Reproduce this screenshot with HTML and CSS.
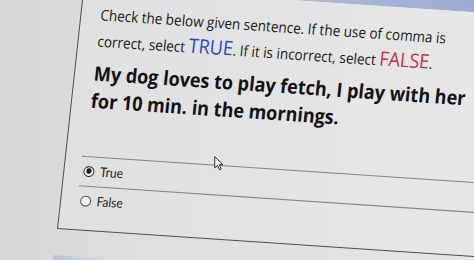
FILE: index.html
```html
<!DOCTYPE html>
<html>
<head>
<meta charset="utf-8">
<link rel="stylesheet" href="styles.css">
</head>
<body>
<div class="stage">
  <div class="topbar"></div>
  <div class="card">
    <p class="prompt">Check the below given sentence. If the use of comma is<br>correct, select <span class="word-true">TRUE</span>. If it is incorrect, select <span class="word-false">FALSE</span>.</p>
    <p class="sentence">My dog loves to play fetch, I play with her<br>for 10 min. in the mornings.</p>
    <div class="answers">
      <div class="answer"><span class="radio radio-checked"></span><span class="answer-label">True</span></div>
      <div class="answer"><span class="radio"></span><span class="answer-label">False</span></div>
    </div>
  </div>
  <div class="btnbar"></div>
</div>
<svg class="cursor" viewBox="0 0 11 17" width="10" height="15">
  <path d="M0.7 0.7 L0.7 13.5 L3.8 10.6 L6 15.6 L8 14.7 L5.8 9.8 L9.9 9.8 Z" fill="#fff" stroke="#222" stroke-width="1.1" stroke-linejoin="round"/>
</svg>
</body>
</html>
```
FILE: styles.css
```css
html, body {
  margin: 0;
  width: 474px;
  height: 260px;
  overflow: hidden;
}
body {
  position: relative;
  background: linear-gradient(90deg, #d6d7d7 0%, #dfe0e0 40%, #e4e5e5 100%);
  font-family: "Open Sans", "Liberation Sans", sans-serif;
  color: #1f1f1f;
}
.stage {
  margin-left: 57px;
  margin-top: -33px;
  width: 470px;
  transform-origin: 0 262px;
  transform: rotate(3.84deg) skewX(-2.39deg) scaleY(1.1);
}
.topbar {
  height: 40px;
  background: linear-gradient(90deg, #c9d0de 0%, #a8b6d6 55%, #93a5cf 100%);
}
.card {
  box-sizing: border-box;
  height: 222px;
  border-left: 1px solid #4e4e4e;
  border-bottom: 1px solid #4e4e4e;
  background: linear-gradient(90deg, #dfe0e0 0%, #e4e5e5 60%, #e7e8e8 100%);
  padding: 13.6px 0 0 19px;
  display: flex;
  flex-direction: column;
}
.prompt {
  margin: 0;
  font-size: 13.5px;
  font-weight: 500;
  line-height: 22px;
  color: #181818;
}
.word-true {
  font-size: 18px;
  font-weight: 400;
  color: #2747c4;
}
.word-false {
  font-size: 18px;
  font-weight: 400;
  color: #c6343e;
}
.sentence {
  margin: 6px 0 0;
  font-size: 18px;
  line-height: 25.5px;
  font-weight: 700;
  color: #121212;
}
.answers {
  margin-top: auto;
  margin-left: -3px;
  padding-bottom: 13.3px;
}
.answer {
  display: flex;
  align-items: center;
  gap: 6px;
  height: 26px;
  padding-left: 2.5px;
  border-top: 1px solid #858585;
}
.radio {
  box-sizing: border-box;
  width: 11px;
  height: 10px;
  border-radius: 50%;
  border: 1px solid #555;
  background: #f2f2f2;
  display: flex;
  align-items: center;
  justify-content: center;
}
.radio-checked {
  border: 1.5px solid #333;
}
.radio-checked::after {
  content: "";
  width: 5px;
  height: 4.5px;
  border-radius: 50%;
  background: #1e1e1e;
}
.answer-label {
  font-family: Lato, "Open Sans", sans-serif;
  font-size: 12px;
  color: #222;
}
.btnbar {
  margin-top: 23.6px;
  margin-left: -1px;
  width: 372px;
  height: 20px;
  border-radius: 2px;
  background: linear-gradient(90deg, #b9c2d0 0%, #e3e6ea 20%, #e3e6ea 85%, #b8c0cc 100%);
}
.cursor {
  position: absolute;
  left: 213.5px;
  top: 155.5px;
}
```
